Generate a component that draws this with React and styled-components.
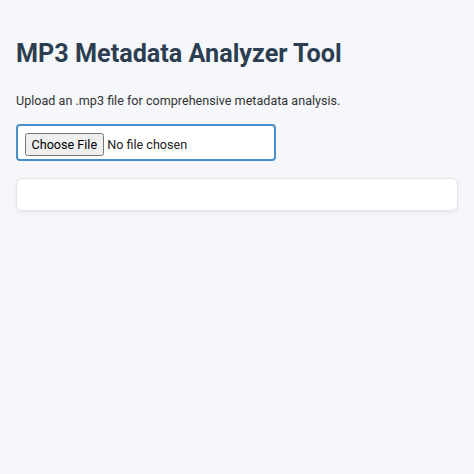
import React from 'react';
import styled, { createGlobalStyle } from 'styled-components';

const GlobalStyle = createGlobalStyle`
  html, body {
    margin: 0;
    padding: 0;
    background: #f5f7fa;
  }
  body {
    font-family: Roboto, 'Liberation Sans', sans-serif;
    color: #333;
    min-height: 474px;
  }
`;

const Page = styled.div`
  padding: 16px;
`;

const Title = styled.h1`
  font-size: 25.2px;
  font-weight: 700;
  color: #2c3e50;
  margin: 22.6px 0 25px;
`;

const Intro = styled.p`
  font-size: 12.6px;
  margin: 0 0 16.2px;
  color: #333;
`;

const FileInput = styled.input`
  display: block;
  width: 260px;
  height: 37px;
  box-sizing: border-box;
  padding: 7px;
  font-family: Roboto, 'Liberation Sans', sans-serif;
  font-size: 12.6px;
  color: #222;
  background: #fff;
  border: 2px solid #4a90c8;
  border-radius: 4px;
  margin-bottom: 17px;

  &::file-selector-button {
    font-family: Roboto, 'Liberation Sans', sans-serif;
    font-size: 12.6px;
    padding: 2px 4.5px;
    margin-right: 3.6px;
  }
`;

const Results = styled.div`
  background: #fff;
  border: 1px solid #e3e5e8;
  border-radius: 6px;
  box-shadow: 0 2px 4px rgba(0, 0, 0, 0.06);
  padding: 15.5px;
`;

const App = () => (
  <Page>
    <GlobalStyle />
    <Title>MP3 Metadata Analyzer Tool</Title>
    <Intro>Upload an .mp3 file for comprehensive metadata analysis.</Intro>
    <FileInput type="file" accept=".mp3" />
    <Results />
  </Page>
);

export default App;
